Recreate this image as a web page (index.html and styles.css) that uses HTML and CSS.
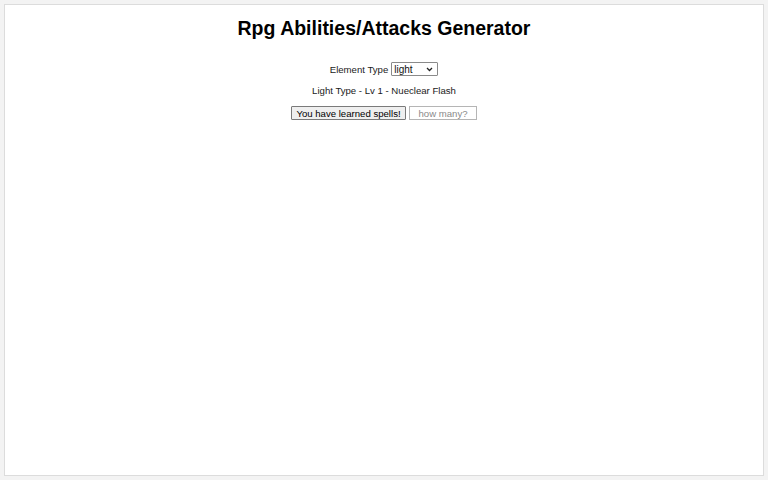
FILE: index.html
```html
<!DOCTYPE html>
<html lang="en">
<head>
    <meta charset="UTF-8">
    <meta name="viewport" content="width=device-width, initial-scale=1.0">
    <title>Rpg Abilities/Attacks Generator</title>
    <link rel="stylesheet" href="styles.css">
</head>
<body>
    <div class="page">
        <h1 class="title">Rpg Abilities/Attacks Generator</h1>

        <div class="row">
            <label for="elementType">Element Type</label>
            <span class="select-wrap">
                <select id="elementType" class="element-select">
                    <option>light</option>
                    <option>fire</option>
                    <option>water</option>
                    <option>earth</option>
                </select>
                <svg class="select-arrow" width="7" height="5" viewBox="0 0 7 5">
                    <path d="M1 1 L3.5 3.5 L6 1" fill="none" stroke="#222" stroke-width="1.3"/>
                </svg>
            </span>
        </div>

        <p class="row result">Light Type - Lv 1 - Nueclear Flash</p>

        <div class="row">
            <button class="learn-btn">You have learned spells!</button>
            <input type="text" class="count-input" placeholder="how many?">
        </div>
    </div>
</body>
</html>
```

FILE: styles.css
```css
* {
    box-sizing: border-box;
}

body {
    margin: 0;
    padding: 4px;
    background-color: #f3f3f3;
    font-family: "Liberation Sans", Arial, sans-serif;
    color: #111;
}

.page {
    height: 472px;
    background-color: #fff;
    border: 1px solid #dcdcdc;
    text-align: center;
    padding-top: 12px;
}

.title {
    margin: 0 0 22px;
    font-size: 19.5px;
    font-weight: bold;
    color: #000;
}

.row {
    margin: 0 0 9px;
    font-size: 9.6px;
    display: flex;
    justify-content: center;
    align-items: center;
    gap: 3px;
    color: #1a1a1a;
}

.result {
    margin-top: 0;
    margin-bottom: 10px;
}

/* custom select so the chevron stays thin */
.select-wrap {
    position: relative;
    display: inline-block;
}

.element-select {
    -webkit-appearance: none;
    appearance: none;
    font-family: inherit;
    font-size: 10px;
    width: 47px;
    height: 14px;
    padding: 0 0 0 2px;
    border: 1px solid #8a8a8a;
    border-radius: 1px;
    background: #fff;
    color: #111;
    display: block;
}

.select-arrow {
    position: absolute;
    right: 5px;
    top: 5px;
    pointer-events: none;
}

.learn-btn {
    font-family: inherit;
    font-size: 9.6px;
    width: 115px;
    height: 14px;
    padding: 0;
    border: 1px solid #7a7a7a;
    border-radius: 1px;
    background: #efefef;
    color: #000;
}

.count-input {
    font-family: inherit;
    font-size: 9.6px;
    width: 68px;
    height: 14px;
    padding: 0 2px;
    border: 1px solid #b5b5b5;
    text-align: center;
}

.count-input::placeholder {
    color: #8a8a8a;
}
```
